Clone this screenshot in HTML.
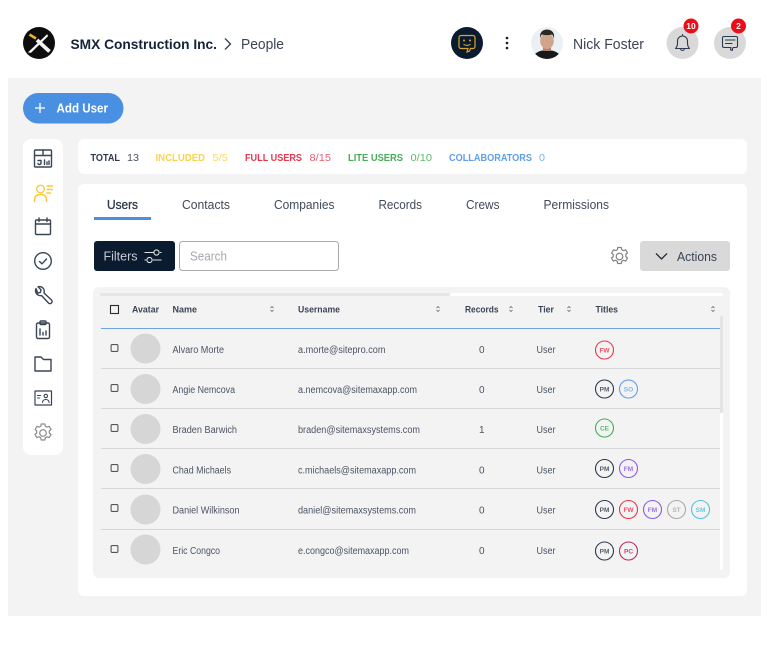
<!DOCTYPE html>
<html><head><meta charset="utf-8"><style>
html,body{margin:0;padding:0;background:#fff;width:768px;height:648px;overflow:hidden}
svg{display:block}
text{font-family:"Liberation Sans",sans-serif}
.m{font-weight:700;font-size:9.5px;fill:#3a4556}
.r{font-size:10px;fill:#4a5464}
.t{font-size:13px;fill:#3f4a5a}
.s{font-size:10.5px;font-weight:700}
.n{font-size:10.5px}
.b{font-size:6.5px;font-weight:700;text-anchor:middle;opacity:.85}
.i{fill:none;stroke:#3a4556;stroke-width:1.4;stroke-linecap:round;stroke-linejoin:round}
</style></head><body>
<svg width="768" height="648" viewBox="0 0 768 648" xmlns="http://www.w3.org/2000/svg">
<defs>
<symbol id="sort" viewBox="0 0 6 8" overflow="visible"><path d="M1.500 3 3 1.500 4.500 3M1.500 5 3 6.500 4.500 5" fill="none" stroke="#777f8a" stroke-width=".9"/></symbol>
<symbol id="cb" viewBox="0 0 8 8" overflow="visible"><rect x=".6" y=".6" width="6.8" height="6.8" rx="1" fill="none" stroke="#555" stroke-width="1.1"/></symbol>
<path id="gear" d="M-1.8-9h3.6l.5 2.2 1.7.9 2.2-.8 1.8 3.1-1.7 1.5v2.1l1.7 1.5-1.8 3.1-2.2-.8-1.7.9-.5 2.3h-3.6l-.5-2.3-1.7-.9-2.2.8-1.8-3.1 1.7-1.5V-2.1L-7.8-3.6-6-6.7l2.2.8 1.7-.9z"/>
</defs>
<rect x="8" y="78" width="753" height="538" fill="#f3f3f3"/>

<!-- header -->
<circle cx="39" cy="43" r="16" fill="#0d0d0d"/>
<path d="M29.500 34.500 36 38.500" stroke="#f2b51d" stroke-width="2.600"/>
<path d="M47 35 29 52 30.800 52.300 47.500 36z" fill="#f4f4f4" stroke="#f4f4f4" stroke-width="1"/>
<path d="M37 40 49.500 51.500" stroke="#f4f4f4" stroke-width="3.800"/>
<text x="70.500" y="49" font-size="14" font-weight="700" fill="#13233a" textLength="146.500" lengthAdjust="spacingAndGlyphs">SMX Construction Inc.</text>
<path d="M225 38.500 230.500 44 225 49.500" fill="none" stroke="#33404f" stroke-width="1.300"/>
<text x="241" y="49" font-size="15" fill="#3a4556" textLength="43" lengthAdjust="spacingAndGlyphs">People</text>

<circle cx="467" cy="43" r="16" fill="#0a1b30"/>
<path d="M461 35.500h12a2 2 0 0 1 2 2v9a2 2 0 0 1-2 2h-2.500l-1 2.500-2.500 1 1-3.500H461a2 2 0 0 1-2-2v-9a2 2 0 0 1 2-2z" fill="none" stroke="#d9a520" stroke-width="1.200"/>
<circle cx="464" cy="40.500" r="1" fill="#d9a520"/><circle cx="470" cy="40.500" r="1" fill="#d9a520"/>
<path d="M463.500 44.300q3.500 2.200 7 0" fill="none" stroke="#d9a520" stroke-width="1.100"/>

<circle cx="507" cy="38" r="1.300" fill="#1a1a1a"/><circle cx="507" cy="43" r="1.300" fill="#1a1a1a"/><circle cx="507" cy="48" r="1.300" fill="#1a1a1a"/>

<clipPath id="av"><circle cx="547" cy="43" r="16"/></clipPath>
<g clip-path="url(#av)">
<rect x="531" y="27" width="32" height="32" fill="#eaf0f4"/>
<path d="M533 59v-3q3-4 9-5.500h10q6 1.500 9 5.500v3z" fill="#17181a"/>
<rect x="543" y="45" width="8" height="6" fill="#b08470"/>
<ellipse cx="547" cy="41" rx="6.800" ry="8" fill="#d0a48c"/>
<path d="M540 38.500q-.8-8.500 7-9 8 .5 7 9-.8-3-2-4-5 1.300-10 0-1.500 1-2 4z" fill="#2b2724"/>
</g>
<text x="573" y="49" font-size="14.500" fill="#3a4556" textLength="71" lengthAdjust="spacingAndGlyphs">Nick Foster</text>

<circle cx="682.500" cy="43" r="16" fill="#d9d9d9"/>
<path class="i" d="M675.500 48.500c1.500-1.500 2-3 2-5.500v-2a5 5 0 0 1 10 0v2c0 2.500.5 4 2 5.500zM680.500 48.500a2 2 0 0 0 4 0M682.500 34.500v1.500" style="stroke:#2c3a4d;stroke-width:1.100"/>
<circle cx="691" cy="26" r="7.500" fill="#e80f1b"/>
<text x="691" y="29" font-size="8.500" font-weight="700" fill="#fff" text-anchor="middle">10</text>
<circle cx="730" cy="43" r="16" fill="#d9d9d9"/>
<path class="i" d="M724 36.500h12a1.500 1.500 0 0 1 1.500 1.500v8a1.500 1.500 0 0 1-1.500 1.500h-3l-.8 3-1.700-.8.500-2.200H724a1.500 1.500 0 0 1-1.500-1.500v-8a1.500 1.500 0 0 1 1.500-1.500zM725.500 40h9.500M725.500 43.500h6.500" style="stroke:#2c3a4d;stroke-width:1.100"/>
<circle cx="738.500" cy="26" r="7.500" fill="#e80f1b"/>
<text x="738.500" y="29" font-size="8.500" font-weight="700" fill="#fff" text-anchor="middle">2</text>

<!-- add user -->
<rect x="23" y="93" width="100.500" height="30.500" rx="15.250" fill="#4a90e2"/>
<path d="M40 103v10M35 108h10" stroke="#fff" stroke-width="1.300"/>
<text x="56.500" y="112.500" font-size="12.500" font-weight="700" fill="#fff" textLength="51.500" lengthAdjust="spacingAndGlyphs">Add User</text>

<!-- sidebar -->
<rect x="23" y="139" width="40" height="316" rx="8" fill="#fff"/>
<g class="i">
<rect x="34.500" y="150" width="17" height="17" rx="1"/>
<path d="M34.500 155.500h17M43 150v5.500M38 160.500h3v2.500q0 1.500-1.500 1.500T38 163.500M44.500 160v4.500M47 162v2.500M49 161v3.500"/>
<g style="stroke:#fcc93d">
<circle cx="40.500" cy="189" r="3.800"/>
<path d="M34.500 201.500v-1.500q0-5.500 6-5.500t6 5.500v1.500M47 186h5.500M47 189.500h5.500M47 193h3.500"/>
</g>
<rect x="35.500" y="220" width="15" height="14.500" rx="1"/>
<path d="M35.500 224h15M39 218v3.500M47 218v3.500"/>
<circle cx="43" cy="261" r="8.300"/>
<path d="M39.500 261.500l2.500 2.300 4.500-4.800"/>
<path d="M36 288.500a5 5 0 0 0 2 6.500q2 1 3.500.5l7 7.500a2 2 0 0 0 3-3l-7.500-7q.8-3-1-5a5 5 0 0 0-5-1.200l3 3-.7 2.600-2.600.7z"/>
<rect x="36.500" y="323" width="13" height="15.500" rx="1.500"/>
<rect x="40" y="321" width="6" height="3.500" rx="1"/>
<path d="M40 335v-6M43 335v-2.500M46 335v-4"/>
<path d="M35 357h6l2.500 2.500H51v11.500H35z"/>
<rect x="35" y="391" width="16.500" height="14" style="stroke-width:1.200"/>
<path d="M37.500 395.500h3M37.500 398h2" style="stroke-width:1.100"/>
<circle cx="45.800" cy="396" r="1.700" style="stroke-width:1.100"/>
<path d="M42.500 402.500q.3-3 3.300-3t3.300 3" style="stroke-width:1.100"/>
<g transform="translate(43 433)" style="stroke:#8b8b8b;stroke-width:1.200"><use href="#gear"/><circle r="3.300"/></g>
</g>

<!-- stats -->
<rect x="78" y="139" width="669" height="35" rx="6" fill="#fff"/>
<text x="90.500" y="161" class="s" fill="#2c3a4d" textLength="29.500" lengthAdjust="spacingAndGlyphs">TOTAL</text>
<text x="127" y="161" class="n" fill="#4a5464" textLength="12" lengthAdjust="spacingAndGlyphs">13</text>
<text x="155.500" y="161" class="s" fill="#fcd34d" textLength="49.500" lengthAdjust="spacingAndGlyphs">INCLUDED</text>
<text x="212.500" y="161" class="n" fill="#fcd56a" textLength="15.500" lengthAdjust="spacingAndGlyphs">5/5</text>
<text x="245" y="161" class="s" fill="#e5384f" textLength="57" lengthAdjust="spacingAndGlyphs">FULL USERS</text>
<text x="309.500" y="161" class="n" fill="#ea5f70" textLength="21.500" lengthAdjust="spacingAndGlyphs">8/15</text>
<text x="348" y="161" class="s" fill="#44ae56" textLength="55" lengthAdjust="spacingAndGlyphs">LITE USERS</text>
<text x="410.500" y="161" class="n" fill="#5cb86c" textLength="21.500" lengthAdjust="spacingAndGlyphs">0/10</text>
<text x="449" y="161" class="s" fill="#5f9fe8" textLength="83" lengthAdjust="spacingAndGlyphs">COLLABORATORS</text>
<text x="539" y="161" class="n" fill="#7db1ee" textLength="6" lengthAdjust="spacingAndGlyphs">0</text>

<!-- main -->
<rect x="78" y="184" width="669" height="412" rx="6" fill="#fff"/>
<text x="107" y="209" class="t" style="fill:#2c3a4d;stroke:#2c3a4d;stroke-width:.3" textLength="31" lengthAdjust="spacingAndGlyphs">Users</text>
<text x="182" y="209" class="t" textLength="48" lengthAdjust="spacingAndGlyphs">Contacts</text>
<text x="274" y="209" class="t" textLength="60.500" lengthAdjust="spacingAndGlyphs">Companies</text>
<text x="378.500" y="209" class="t" textLength="43.500" lengthAdjust="spacingAndGlyphs">Records</text>
<text x="466" y="209" class="t" textLength="33.500" lengthAdjust="spacingAndGlyphs">Crews</text>
<text x="543.500" y="209" class="t" textLength="65.500" lengthAdjust="spacingAndGlyphs">Permissions</text>
<rect x="94" y="217" width="57" height="3" fill="#4a90e2"/>

<rect x="94" y="241" width="81" height="30" rx="3" fill="#0a1b30"/>
<text x="103.500" y="260.500" font-size="12.500" fill="#c6cbd2" textLength="34" lengthAdjust="spacingAndGlyphs">Filters</text>
<path d="M144.500 252.500h9M160 252.500h1.500M146 260h-1.500M153 260h8.500" stroke="#dfe2e6" stroke-width="1.100" fill="none"/>
<circle cx="156.500" cy="252.500" r="2.600" fill="none" stroke="#dfe2e6" stroke-width="1.100"/>
<circle cx="149.500" cy="260" r="2.600" fill="none" stroke="#dfe2e6" stroke-width="1.100"/>
<rect x="179.500" y="241.500" width="159" height="29" rx="3" fill="#fff" stroke="#a9a9a9"/>
<text x="190" y="260.500" font-size="12.500" fill="#a3a8ae" textLength="37" lengthAdjust="spacingAndGlyphs">Search</text>

<g transform="translate(619.500 256.500)" fill="none" stroke="#808488" stroke-width="1.200" stroke-linejoin="round"><use href="#gear"/><circle r="3.300"/></g>
<rect x="640" y="241" width="90" height="30" rx="3" fill="#d9d9d9"/>
<path d="M656 253.500 661.500 259 667 253.500" fill="none" stroke="#1f2935" stroke-width="1.300"/>
<text x="677" y="261" font-size="12.500" fill="#3a4556" textLength="40" lengthAdjust="spacingAndGlyphs">Actions</text>

<!-- table -->
<rect x="93" y="287" width="637" height="291" rx="6" fill="#f3f3f3"/>
<rect x="100" y="293" width="623" height="3" fill="#fff"/>
<rect x="100" y="293" width="350" height="3" fill="#e6e6e6"/>
<rect x="720" y="316" width="3" height="254" fill="#fff"/>
<rect x="720" y="316" width="3" height="97" fill="#e4e4e4"/>

<rect x="110.500" y="305.500" width="8" height="8" fill="none" stroke="#2b2b2b" stroke-width="1.100"/>
<text x="132" y="312.500" class="m" textLength="27" lengthAdjust="spacingAndGlyphs">Avatar</text>
<text x="172.500" y="312.500" class="m" textLength="24.500" lengthAdjust="spacingAndGlyphs">Name</text>
<text x="298" y="312.500" class="m" textLength="42" lengthAdjust="spacingAndGlyphs">Username</text>
<text x="465" y="312.500" class="m" textLength="33.500" lengthAdjust="spacingAndGlyphs">Records</text>
<text x="538" y="312.500" class="m" textLength="16" lengthAdjust="spacingAndGlyphs">Tier</text>
<text x="595.500" y="312.500" class="m" textLength="22.500" lengthAdjust="spacingAndGlyphs">Titles</text>
<use href="#sort" x="269" y="305" width="6" height="8"/>
<use href="#sort" x="435" y="305" width="6" height="8"/>
<use href="#sort" x="508" y="305" width="6" height="8"/>
<use href="#sort" x="566" y="305" width="6" height="8"/>
<use href="#sort" x="710" y="305" width="6" height="8"/>
<rect x="101" y="328" width="619" height="1" fill="#6ba3e6"/>

<g fill="#d6d6d6">
<rect x="101" y="368" width="619" height="1"/><rect x="101" y="408" width="619" height="1"/><rect x="101" y="448" width="619" height="1"/><rect x="101" y="488" width="619" height="1"/><rect x="101" y="529" width="619" height="1"/>
<circle cx="145.500" cy="348.500" r="15"/><circle cx="145.500" cy="389" r="15"/><circle cx="145.500" cy="429" r="15"/><circle cx="145.500" cy="469" r="15"/><circle cx="145.500" cy="509.500" r="15"/><circle cx="145.500" cy="549.500" r="15"/>
</g>
<use href="#cb" x="110.500" y="344" width="8" height="8"/>
<use href="#cb" x="110.500" y="384" width="8" height="8"/>
<use href="#cb" x="110.500" y="424" width="8" height="8"/>
<use href="#cb" x="110.500" y="464" width="8" height="8"/>
<use href="#cb" x="110.500" y="504" width="8" height="8"/>
<use href="#cb" x="110.500" y="545" width="8" height="8"/>

<text x="172.500" y="353" class="r" textLength="51.500" lengthAdjust="spacingAndGlyphs">Alvaro Morte</text>
<text x="298" y="353" class="r" textLength="87.500" lengthAdjust="spacingAndGlyphs">a.morte@sitepro.com</text>
<text x="479" y="353" class="r">0</text><text x="536.500" y="353" class="r" textLength="19" lengthAdjust="spacingAndGlyphs">User</text>
<text x="172.500" y="393" class="r" textLength="62.500" lengthAdjust="spacingAndGlyphs">Angie Nemcova</text>
<text x="298" y="393" class="r" textLength="119" lengthAdjust="spacingAndGlyphs">a.nemcova@sitemaxapp.com</text>
<text x="479" y="393" class="r">0</text><text x="536.500" y="393" class="r" textLength="19" lengthAdjust="spacingAndGlyphs">User</text>
<text x="172.500" y="433" class="r" textLength="64.500" lengthAdjust="spacingAndGlyphs">Braden Barwich</text>
<text x="298" y="433" class="r" textLength="122" lengthAdjust="spacingAndGlyphs">braden@sitemaxsystems.com</text>
<text x="479" y="433" class="r">1</text><text x="536.500" y="433" class="r" textLength="19" lengthAdjust="spacingAndGlyphs">User</text>
<text x="172.500" y="473.500" class="r" textLength="58.500" lengthAdjust="spacingAndGlyphs">Chad Michaels</text>
<text x="298" y="473.500" class="r" textLength="118" lengthAdjust="spacingAndGlyphs">c.michaels@sitemaxapp.com</text>
<text x="479" y="473.500" class="r">0</text><text x="536.500" y="473.500" class="r" textLength="19" lengthAdjust="spacingAndGlyphs">User</text>
<text x="172.500" y="513.500" class="r" textLength="67" lengthAdjust="spacingAndGlyphs">Daniel Wilkinson</text>
<text x="298" y="513.500" class="r" textLength="118" lengthAdjust="spacingAndGlyphs">daniel@sitemaxsystems.com</text>
<text x="479" y="513.500" class="r">0</text><text x="536.500" y="513.500" class="r" textLength="19" lengthAdjust="spacingAndGlyphs">User</text>
<text x="172.500" y="554" class="r" textLength="47.500" lengthAdjust="spacingAndGlyphs">Eric Congco</text>
<text x="298" y="554" class="r" textLength="111" lengthAdjust="spacingAndGlyphs">e.congco@sitemaxapp.com</text>
<text x="479" y="554" class="r">0</text><text x="536.500" y="554" class="r" textLength="19" lengthAdjust="spacingAndGlyphs">User</text>

<!-- badges -->
<g fill="none" stroke-width="1.100">
<circle cx="604.500" cy="350" r="9" stroke="#e5384f"/>
<circle cx="604.500" cy="389" r="9" stroke="#2c3a4d"/><circle cx="628.500" cy="389" r="9" stroke="#5f9fe8"/>
<circle cx="604.500" cy="428" r="9" stroke="#44ae56"/>
<circle cx="604.500" cy="468.500" r="9" stroke="#2c3a4d"/><circle cx="628.500" cy="468.500" r="9" stroke="#8a5be6"/>
<circle cx="604.500" cy="509.500" r="9" stroke="#2c3a4d"/><circle cx="628.500" cy="509.500" r="9" stroke="#e5384f"/><circle cx="652.500" cy="509.500" r="9" stroke="#8a5be6"/><circle cx="676.500" cy="509.500" r="9" stroke="#a9a9a9"/><circle cx="700.500" cy="509.500" r="9" stroke="#4fc4dc"/>
<circle cx="604.500" cy="551" r="9" stroke="#2c3a4d"/><circle cx="628.500" cy="551" r="9" stroke="#b82c55"/>
</g>
<text x="604.500" y="352.500" class="b" fill="#e5384f">FW</text>
<text x="604.500" y="391.500" class="b" fill="#3a4556">PM</text><text x="628.500" y="391.500" class="b" fill="#6ea8ea">SO</text>
<text x="604.500" y="430.500" class="b" fill="#44ae56">CE</text>
<text x="604.500" y="471" class="b" fill="#3a4556">PM</text><text x="628.500" y="471" class="b" fill="#8a5be6">FM</text>
<text x="604.500" y="512" class="b" fill="#3a4556">PM</text><text x="628.500" y="512" class="b" fill="#e5384f">FW</text><text x="652.500" y="512" class="b" fill="#8a5be6">FM</text><text x="676.500" y="512" class="b" fill="#a9a9a9">ST</text><text x="700.500" y="512" class="b" fill="#4fc4dc">SM</text>
<text x="604.500" y="553.500" class="b" fill="#3a4556">PM</text><text x="628.500" y="553.500" class="b" fill="#b82c55">PC</text>
</svg>
</body></html>
